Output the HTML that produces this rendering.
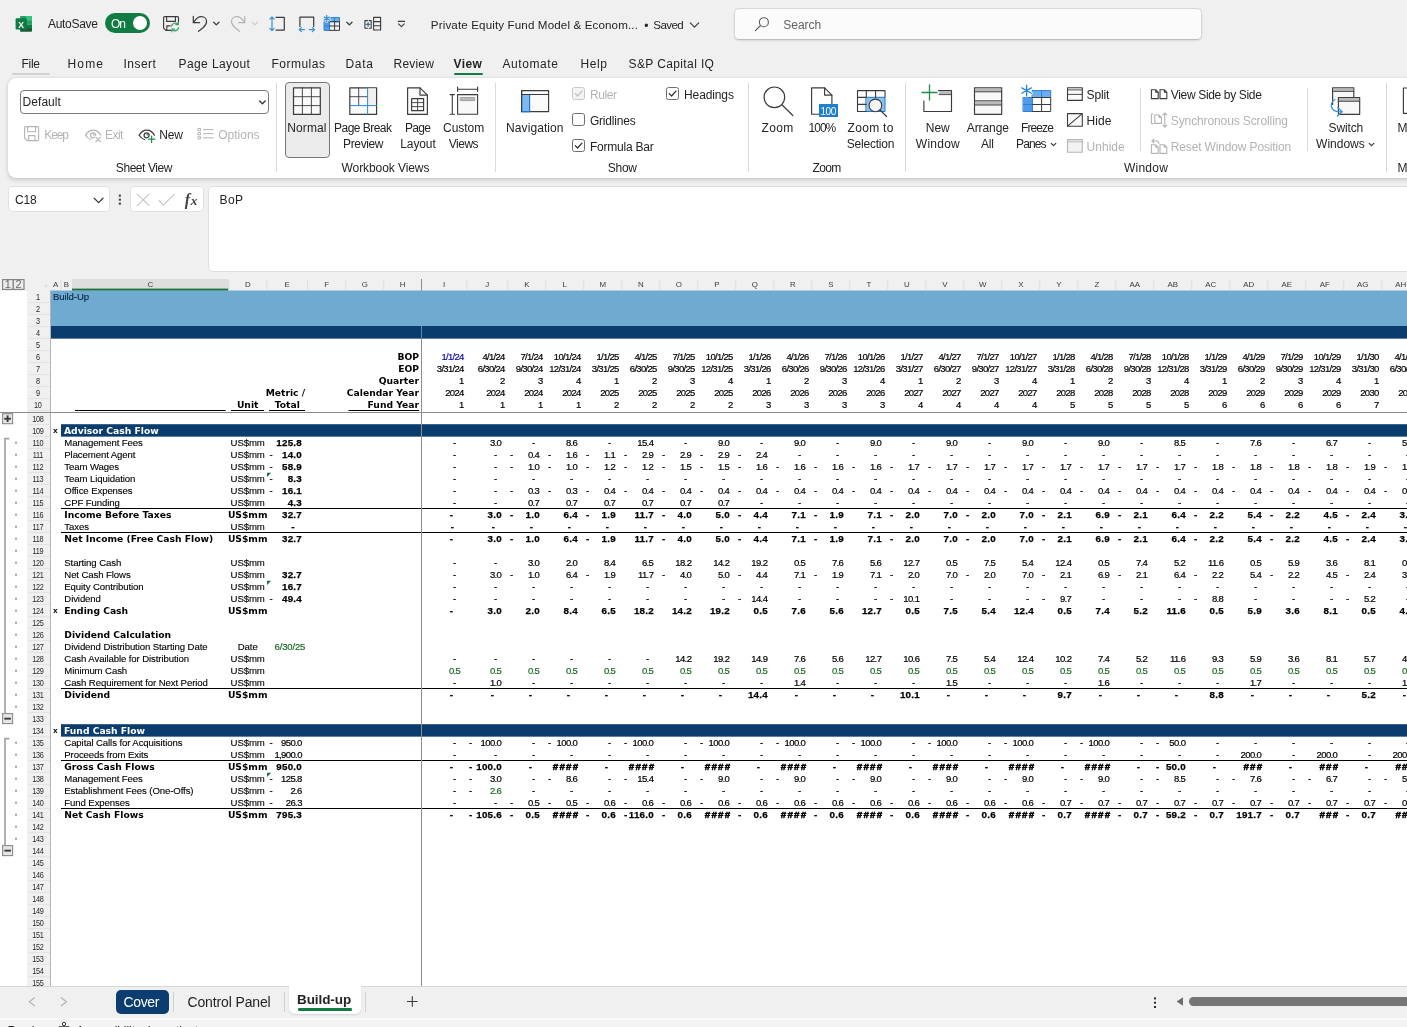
<!DOCTYPE html>
<html lang="en"><head><meta charset="utf-8"><title>Private Equity Fund Model &amp; Economics - Excel</title>
<style>

html,body{margin:0;padding:0;}
body{width:1407px;height:1027px;overflow:hidden;background:#f0f0f0;font-family:"Liberation Sans",sans-serif;}
#app{will-change:transform;position:relative;width:1407px;height:1027px;overflow:hidden;background:#f0f0f0;}
.t{position:absolute;white-space:pre;}
.a{position:absolute;}
svg{position:absolute;overflow:visible;}
.c{position:absolute;white-space:pre;font-size:9.6px;letter-spacing:-0.1px;-webkit-text-stroke:0.12px currentColor;line-height:12px;height:12px;color:#000;}
.n{font-size:9.5px;letter-spacing:-0.62px;-webkit-text-stroke:0.2px currentColor;}
.b{font-family:'DejaVu Sans',sans-serif;font-weight:700;font-size:9.2px;letter-spacing:0;-webkit-text-stroke:0;}
.bn{font-weight:700;font-size:9.8px;letter-spacing:0.2px;-webkit-text-stroke:0.25px currentColor;}
.r{text-align:right;}
.ctr{text-align:center;}
.g{color:#1c6a25;}
.rh{position:absolute;left:27px;width:21.6px;text-align:center;font-size:8.7px;letter-spacing:-0.35px;transform:scaleX(0.84);line-height:12px;height:12px;color:#262626;}
.ch{position:absolute;top:279px;height:12px;line-height:12px;font-size:7.9px;color:#3a3a3a;text-align:center;}

.row{position:absolute;left:421.5px;height:12px;white-space:nowrap;font-size:0;}
.row>i{display:inline-block;position:relative;font-style:normal;width:38px;height:12px;line-height:12px;font-size:9.5px;letter-spacing:-0.62px;text-align:right;padding-right:6.5px;box-sizing:border-box;color:#000;vertical-align:top;-webkit-text-stroke:0.2px currentColor;}
.row>i.w1{width:45.3px}.row>i.w2{width:41px}
.row>i.z{padding-right:11.2px}
.row>i>u{position:absolute;left:2.2px;top:0;text-decoration:none;}
.row.B>i{font-weight:700;font-size:9.8px;letter-spacing:0.2px;padding-right:6px;-webkit-text-stroke:0.25px currentColor;}
.row.B>i.z,.row.ZB>i.z{padding-right:13.5px}
.row.ZB>i{font-weight:700;}
.row.B>i.h{letter-spacing:1.2px;padding-right:4.4px;-webkit-text-stroke:0.55px currentColor;}
.row>i.g>u{color:#000;}
.row.G>i,.row>i.g{color:#1c6a25;}
.row.H>i{padding-right:3.2px;letter-spacing:-0.7px;}
.row>i.bl{color:#0a0aa8;}
</style></head>
<body>
<div id="app">
<div class="a" style="left:8px;top:77.5px;width:1420px;height:100.5px;background:#fff;border-radius:8px;box-shadow:0 1.5px 4px rgba(0,0,0,.17),0 0 1px rgba(0,0,0,.12);"></div>
<div class="a" style="left:734px;top:8px;width:467.5px;height:32px;background:#fbfbfb;border:1px solid #d6d6d6;border-bottom-color:#bdbdbd;border-radius:5px;box-sizing:border-box;box-shadow:0 1px 2px rgba(0,0,0,.10);"></div>
<div class="a" style="left:105px;top:13px;width:45px;height:20px;border-radius:10px;background:#107c41;"></div>
<div class="a" style="left:133px;top:16px;width:14px;height:14px;border-radius:7px;background:#fff;"></div>
<div class="a" style="left:12px;top:73px;width:38px;height:1.5px;background:#d2d2d2;border-radius:1px;"></div>
<div class="a" style="left:454px;top:72.5px;width:28.5px;height:2.6px;background:#107c41;border-radius:1.3px;"></div>
<div class="a" style="left:20px;top:90px;width:249px;height:24px;box-sizing:border-box;border:1px solid #7a7a7a;border-radius:4px;background:#fff;"></div>
<div class="a" style="left:285px;top:82px;width:45px;height:76px;box-sizing:border-box;border:1px solid #777;border-radius:4px;background:#ebebeb;"></div>
<div class="a" style="left:276px;top:83px;width:1px;height:89px;background:#dadada;"></div>
<div class="a" style="left:495px;top:83px;width:1px;height:89px;background:#dadada;"></div>
<div class="a" style="left:748px;top:83px;width:1px;height:89px;background:#dadada;"></div>
<div class="a" style="left:905px;top:83px;width:1px;height:89px;background:#dadada;"></div>
<div class="a" style="left:1386px;top:83px;width:1px;height:89px;background:#dadada;"></div>
<div class="a" style="left:1140px;top:88px;width:1px;height:63px;background:#dadada;"></div>
<div class="a" style="left:1307px;top:88px;width:1px;height:63px;background:#dadada;"></div>
<div class="a" style="left:572px;top:87px;width:13px;height:13px;box-sizing:border-box;border:1px solid #c9c9c9;border-radius:2.5px;background:#f3f3f3;"></div><svg style="left:572px;top:87px" width="13" height="13" viewBox="0 0 13 13"><path d="M3.2 6.6 L5.6 9 L10 4.2" fill="none" stroke="#c0c0c0" stroke-width="1.2" stroke-linecap="round" stroke-linejoin="round"/></svg>
<div class="a" style="left:572px;top:113px;width:13px;height:13px;box-sizing:border-box;border:1px solid #6e6e6e;border-radius:2.5px;background:#fff;"></div>
<div class="a" style="left:572px;top:139px;width:13px;height:13px;box-sizing:border-box;border:1px solid #6e6e6e;border-radius:2.5px;background:#fff;"></div><svg style="left:572px;top:139px" width="13" height="13" viewBox="0 0 13 13"><path d="M3.2 6.6 L5.6 9 L10 4.2" fill="none" stroke="#2b2b2b" stroke-width="1.2" stroke-linecap="round" stroke-linejoin="round"/></svg>
<div class="a" style="left:666px;top:87px;width:13px;height:13px;box-sizing:border-box;border:1px solid #6e6e6e;border-radius:2.5px;background:#fff;"></div><svg style="left:666px;top:87px" width="13" height="13" viewBox="0 0 13 13"><path d="M3.2 6.6 L5.6 9 L10 4.2" fill="none" stroke="#2b2b2b" stroke-width="1.2" stroke-linecap="round" stroke-linejoin="round"/></svg>
<div class="a" style="left:9px;top:187px;width:100px;height:24px;background:#fff;border-radius:4px;box-shadow:0 0 0 1px rgba(0,0,0,.06);"></div>
<div class="a" style="left:131px;top:187px;width:72px;height:24px;background:#fff;border-radius:4px;box-shadow:0 0 0 1px rgba(0,0,0,.06);"></div>
<div class="a" style="left:209px;top:187px;width:1220px;height:84px;background:#fff;border-radius:4px;box-shadow:0 0 0 1px rgba(0,0,0,.07);"></div>
<svg style="left:0;top:0" width="1407" height="300" viewBox="0 0 1407 300" fill="none" stroke-linecap="round" stroke-linejoin="round">
<g stroke="none"><path d="M21 16h10a1 1 0 0 1 1 1v3.7H20V17a1 1 0 0 1 1-1z" fill="#21a366"/><rect x="26" y="16" width="6" height="4.7" fill="#33c481"/><rect x="20" y="20.7" width="6" height="3.7" fill="#107c41"/><rect x="26" y="20.7" width="6" height="3.7" fill="#21a366"/><rect x="20" y="24.4" width="6" height="3.6" fill="#185c37"/><rect x="26" y="24.4" width="6" height="3.6" fill="#107c41"/><path d="M20 28h12v2.8a1 1 0 0 1-1 1H21a1 1 0 0 1-1-1z" fill="#185c37"/><rect x="15.6" y="18.2" width="11.2" height="11.4" rx="1" fill="#127a43"/></g>
<g stroke="#3b3b3b" stroke-width="1.15"><path d="M171 30.4h-5.2l-2.2-2.2V17.6a1 1 0 0 1 1-1h12.9a1 1 0 0 1 1 1V23"/><path d="M166.6 16.8v4.6h8.8v-4.6"/><path d="M166.8 30.2v-4.4h3.4"/></g>
<g stroke="#3fa066" stroke-width="1.25"><path d="M171.6 26.2a3.7 3.7 0 0 1 6.4-1.9"/><path d="M178.3 22.1v2.5h-2.5"/><path d="M178.6 27.6a3.7 3.7 0 0 1-6.4 1.9"/><path d="M171.9 31.7v-2.5h2.5"/></g>
<g stroke="#3b3b3b" stroke-width="1.2"><path d="M193.3 16.4v6.3h6.3"/><path d="M193.8 22.2c2.2-3.7 5.2-5.6 7.7-5.6 3 0 5.1 2.2 5.1 5 0 2.4-1.6 4.4-3.6 6.2l-4.4 3.5"/><path d="M213.7 22.3l2.6 2.6 2.6-2.6" stroke-width="1.3"/></g>
<g stroke="#b4b4b4" stroke-width="1.2"><path d="M244.8 16.4v6.3h-6.3"/><path d="M244.3 22.2c-2.2-3.7-5.2-5.6-7.7-5.6-3 0-5.1 2.2-5.1 5 0 2.4 1.6 4.4 3.6 6.2l4.4 3.5"/><path d="M252.3 22.3l2.6 2.6 2.6-2.6" stroke="#cdcdcd" stroke-width="1.3"/></g>
<g stroke-width="1.2"><path d="M276 17.3h8.3v12.8H276" stroke="#3b3b3b"/><path d="M272 17v13.4M269.9 19.2l2.1-2.3 2.1 2.3M269.9 28.3l2.1 2.3 2.1-2.3" stroke="#3a8fd6"/></g>
<g stroke-width="1.2"><path d="M299.9 26.6v-9.4h13.8v9.4" stroke="#3b3b3b"/><path d="M299.3 29.6h5.2M301.4 27.6l-2.2 2 2.2 2M309.3 29.6h5.2M312.4 27.6l2.2 2-2.2 2" stroke="#3a8fd6"/></g>
<g stroke-width="1"><rect x="329.6" y="17.6" width="9.9" height="4.1" fill="#6fb0f0" stroke="#2b7fd6"/><path d="M334.6 17.6v4.1" stroke="#2b7fd6"/><rect x="324.4" y="21.7" width="5.2" height="8.7" fill="#4f9be8" stroke="#2b7fd6"/><path d="M324.4 26h5.2" stroke="#2b7fd6"/><path d="M329.6 21.7h9.9v8.7h-9.9M334.6 21.7v8.7M329.6 26h9.9" stroke="#3b3b3b"/><path d="M326.8 15.4v6.2M324.1 17l5.4 3.1M329.5 17l-5.4 3.1" stroke="#f0f0f0" stroke-width="2.6"/><path d="M326.8 15.4v6.2M324.1 17l5.4 3.1M329.5 17l-5.4 3.1" stroke="#2584d8" stroke-width="1.15"/></g>
<path d="M346.8 22.3l2.6 2.6 2.6-2.6" stroke="#3b3b3b" stroke-width="1.3"/>
<g stroke="#3b3b3b" stroke-width="1.1"><rect x="373.6" y="17.4" width="7" height="12.6"/><path d="M373.6 21.6h7M373.6 25.8h7"/><path d="M367.5 20.6h-2.6v7.6h2.6M369.2 20.6h2v7.6h-2" /><path d="M366.3 24.4h3.6M368.1 22.6v3.6" stroke="#2f6f8f" stroke-width="1.2"/></g>
<path d="M398.3 21.4h6.2M398.5 23.9l2.9 2.8 2.9-2.8" stroke="#3b3b3b" stroke-width="1.15"/>
<path d="M690.3 22.9l4.2 4.2 4.2-4.2" stroke="#3b3b3b" stroke-width="1.15"/>
<g stroke="#5e5e5e" stroke-width="1.15"><circle cx="763.9" cy="22.2" r="4.5"/><path d="M760.6 25.5l-5.2 5.2"/></g>
<path d="M259.6 100.9l2.8 2.8 2.8-2.8" stroke="#3b3b3b" stroke-width="1.4"/>
<g stroke="#b4b4b4" stroke-width="1.1"><path d="M24.6 127.6a1 1 0 0 1 1-1h12a1 1 0 0 1 1 1v12a1 1 0 0 1-1 1H27.2l-2.6-2.6z"/><path d="M27.6 126.8v5h8v-5"/><path d="M28.6 140.4v-4.8h6.4v4.8"/></g>
<g stroke="#b4b4b4" stroke-width="1.25"><path d="M85.6 135.2c1.9-3.3 4.6-5 7.6-5s5.7 1.7 7.6 5"/><path d="M85.6 135.2c1.3 2.2 3 3.6 5.2 4.3"/><circle cx="93.0" cy="135.29999999999998" r="2.5"/><circle cx="93.6" cy="134.7" r="0.7" fill="#b4b4b4" stroke="none"/></g>
<path d="M95.8 137.2l4.6 4.6M100.4 137.2l-4.6 4.6" stroke="#fff" stroke-width="2.6"/><path d="M95.8 137.2l4.6 4.6M100.4 137.2l-4.6 4.6" stroke="#b4b4b4" stroke-width="1.15"/>
<g stroke="#3b3b3b" stroke-width="1.25"><path d="M139.2 135.2c1.9-3.3 4.6-5 7.6-5s5.7 1.7 7.6 5"/><path d="M139.2 135.2c1.3 2.2 3 3.6 5.2 4.3"/><circle cx="146.6" cy="135.29999999999998" r="2.5"/><circle cx="147.2" cy="134.7" r="0.7" fill="#3b3b3b" stroke="none"/></g>
<path d="M148.4 139.2h6.4M151.6 136v6.4" stroke="#fff" stroke-width="3"/><path d="M148.4 139.2h6.4M151.6 136v6.4" stroke="#1e8a4c" stroke-width="1.25"/>
<g stroke="#b4b4b4" stroke-width="1"><rect x="198.3" y="128.5" width="2.2" height="2.2"/><rect x="198.3" y="132.6" width="2.2" height="2.2"/><rect x="198.3" y="136.7" width="2.2" height="2.2"/><path d="M203.4 129.6h9.8M203.4 133.7h9.8M203.4 137.8h9.8"/></g>
<g stroke="#3b3b3b"><rect x="293.5" y="87.8" width="26.8" height="26.6" fill="#fafafa" stroke-width="1.2"/><path d="M302.4 87.8v26.6M311.4 87.8v26.6M293.5 96.7h26.8M293.5 105.6h26.8" stroke-width="0.9"/></g>
<g><rect x="349.8" y="87.8" width="26.8" height="26.6" fill="#fafafa" stroke="#3b3b3b" stroke-width="1.2"/><rect x="367.6" y="88.4" width="8.4" height="17" fill="#f0f0f0" stroke="none"/><path d="M358.7 87.8v17.7M349.8 96.7h17.8" stroke="#3b3b3b" stroke-width="0.9"/><path d="M367.6 87.8v26.6M349.8 105.6h26.8" stroke="#2b8ad6" stroke-width="1"/></g>
<g stroke="#3b3b3b" stroke-width="1.15"><path d="M407.6 87.8h12.4l7.4 7.3v19.3h-19.8z" fill="#fafafa"/><path d="M420 87.8v7.3h7.4"/><rect x="411.6" y="98.6" width="12" height="12"/><path d="M417.6 98.6v12M411.6 102.6h12M411.6 106.6h12" stroke-width="0.9"/></g>
<g stroke="#3b3b3b" stroke-width="1.1"><path d="M457.6 89.2h20M457.6 87v4.4M477.6 87v4.4M452.3 94.6v19.7M450.1 94.6h4.4M450.1 114.3h4.4"/><rect x="457.6" y="94.6" width="20" height="19.7" fill="#f8f8f8"/><rect x="460.6" y="97.6" width="14" height="3" fill="#bdbdbd" stroke="#8f8f8f" stroke-width="0.8"/></g>
<g stroke-width="1.15"><rect x="521.6" y="90.6" width="27" height="21" fill="#fafafa" stroke="#3b3b3b"/><rect x="521.6" y="94.5" width="8" height="17.1" fill="#7fb9ee" stroke="#1f78d1"/><path d="M521.6 94.5h27" stroke="#3b3b3b"/><path d="M521.6 90.6v21" stroke="#3b3b3b"/></g>
<g stroke="#3b3b3b" stroke-width="1.2"><circle cx="774.4" cy="97.3" r="10.3"/><path d="M781.9 104.8l10.9 10.7"/></g>
<g stroke="#3b3b3b" stroke-width="1.15"><path d="M819 114.2h-7.4V87.8h13l7.3 7.3v9"/><path d="M824.6 87.8v7.3h7.3"/></g><rect x="819" y="104" width="19" height="13" fill="#1e7fd1" stroke="none"/>
<g stroke-width="1"><rect x="866.3" y="97.3" width="18.7" height="14.2" fill="#8fc1ef" stroke="#1f78d1"/><path d="M857.5 90.6h27.5v6.7M857.5 90.6v20.9h8.8M857.5 97.4h8.8M857.5 104.4h8.8M866.3 90.6v6.8M875.6 90.6v6.8" stroke="#3b3b3b" stroke-width="1.1"/><circle cx="875.4" cy="105.4" r="6.3" fill="#f4f4f4" stroke="#3b3b3b" stroke-width="1.1"/><path d="M880 110l6.6 6.5" stroke="#3b3b3b" stroke-width="1.2"/></g>
<g stroke-width="1.15"><path d="M938.5 90.6h13v20.9h-27.6V101" stroke="#3b3b3b" fill="none"/><rect x="939.3" y="91.2" width="11.7" height="3.2" fill="#b9b9b9" stroke="none"/><path d="M939 94.6h12.5" stroke="#3b3b3b" stroke-width="0.9"/><path d="M922 92.5h15M929.5 85v15" stroke="#1e8a4c" stroke-width="1.3"/></g>
<g stroke="#3b3b3b" stroke-width="1.15"><rect x="974.5" y="87.8" width="27.2" height="26.5" fill="#f8f8f8"/><rect x="975.1" y="88.4" width="26" height="3.2" fill="#b9b9b9" stroke="none"/><rect x="975.1" y="101.4" width="26" height="3.4" fill="#b9b9b9" stroke="none"/><path d="M974.5 91.8h27.2M974.5 100.8h27.2M974.5 105h27.2" stroke-width="0.95"/></g>
<g stroke-width="1"><rect x="1032.4" y="90.6" width="18.3" height="6.9" fill="#6aaeee" stroke="#2b7fd6"/><rect x="1023.4" y="97.5" width="9" height="14" fill="#4f9be8" stroke="#2b7fd6"/><path d="M1041.6 90.6v6.9M1023.4 104.5h9" stroke="#2b7fd6"/><path d="M1032.4 97.5h18.3v14h-18.3M1041.6 97.5v14M1032.4 104.5h18.3" stroke="#3b3b3b"/><path d="M1026.6 85.2v10.8M1021.9 87.9l9.4 5.4M1031.3 87.9l-9.4 5.4" stroke="#fff" stroke-width="3"/><path d="M1026.6 85.2v10.8M1021.9 87.9l9.4 5.4M1031.3 87.9l-9.4 5.4" stroke="#2584d8" stroke-width="1.3"/></g>
<path d="M1051.2 143.4l2.3 2.3 2.3-2.3" stroke="#3b3b3b" stroke-width="1.2"/>
<path d="M1369.2 143.4l2.3 2.3 2.3-2.3" stroke="#3b3b3b" stroke-width="1.2"/>
<g stroke="#3b3b3b" stroke-width="1.1"><rect x="1067.5" y="87.8" width="14.8" height="12.6" fill="#fafafa"/><path d="M1067.5 89.9h14.8M1067.5 94.4h14.8" stroke-width="0.9"/></g>
<g stroke="#3b3b3b" stroke-width="1.1"><rect x="1067.5" y="113.6" width="14.8" height="12.6" fill="#fafafa"/><path d="M1067.8 125.9l14.2-12"/></g>
<g stroke="#b4b4b4" stroke-width="1.1"><rect x="1067.5" y="139.6" width="14.8" height="12.6" fill="#f2f2f2"/><path d="M1067.5 141.8h14.8" stroke-width="0.9"/></g>
<path d="M1151.4 89.8h4.4l2.4 2.4v6.4h-6.8z M1155.8 89.8v2.4h2.4" stroke="#3b3b3b" stroke-width="1.1" stroke-linejoin="miter"/>
<path d="M1160 89.8h4.4l2.4 2.4v6.4h-6.8z M1164.3999999999999 89.8v2.4h2.4" stroke="#3b3b3b" stroke-width="1.1" stroke-linejoin="miter"/>
<g stroke="#b4b4b4" stroke-width="1.1"><path d="M1153.2 114h-1.8v9.6h1.8"/></g><path d="M1154.8 115h4.199999999999999l2.4 2.4v6.0h-6.6z M1158.9999999999998 115v2.4h2.4" stroke="#b4b4b4" stroke-width="1.1" stroke-linejoin="miter"/><path d="M1164.8 112.8v14.4M1162.8 114.8l2-2 2 2M1162.8 125.2l2 2 2-2" stroke="#b4b4b4" stroke-width="1.1"/>
<path d="M1151.4 144.8h4.4l2.4 2.4v6.199999999999999h-6.8z M1155.8 144.8v2.4h2.4" stroke="#b4b4b4" stroke-width="1.1" stroke-linejoin="miter"/><path d="M1160 144.8h4.4l2.4 2.4v6.199999999999999h-6.8z M1164.3999999999999 144.8v2.4h2.4" stroke="#b4b4b4" stroke-width="1.1" stroke-linejoin="miter"/><path d="M1152 141h4.2c1.6 0 2.6 1 2.6 2.4M1153.8 139.2l-1.9 1.8 1.9 1.8" stroke="#b4b4b4" stroke-width="1.1"/>
<g stroke="#3b3b3b" stroke-width="1.15"><path d="M1332.6 104.5V87.8h21.2v9.3" fill="#f8f8f8"/><rect x="1333.2" y="88.4" width="20" height="2.8" fill="#b9b9b9" stroke="none"/><path d="M1332.6 91.4h21.2" stroke-width="0.9"/><rect x="1338.4" y="97.6" width="21.3" height="16.7" fill="#f8f8f8"/><rect x="1339" y="98.2" width="20.1" height="2.9" fill="#b9b9b9" stroke="none"/><path d="M1338.4 101.3h21.3" stroke-width="0.9"/></g>
<path d="M1334.8 99.6c-3.6 2.2-4.6 6.2-2.4 9.2 1.8 2.4 5.2 3.2 9.4 3M1337.6 107.4l4.6 4.4-4.8 4.2" stroke="#3a8fd6" stroke-width="1.2"/>
<path d="M1410 88h-6.6v25.4h6.6" stroke="#3b3b3b" stroke-width="1.15"/>
<path d="M94.2 198.2l4.4 4.4 4.4-4.4" stroke="#3b3b3b" stroke-width="1.25"/>
<g fill="#444" stroke="none"><rect x="118.8" y="194.6" width="2.1" height="2.1"/><rect x="118.8" y="198.6" width="2.1" height="2.1"/><rect x="118.8" y="202.6" width="2.1" height="2.1"/></g>
<path d="M137.2 194.2l12 11.4M149.2 194.2l-12 11.4" stroke="#c4c4c4" stroke-width="1.1"/>
<path d="M159 200.6l4.4 4.6 11-11" stroke="#c4c4c4" stroke-width="1.1"/>
</svg>
<!-- sheet -->
<div class="a" style="left:0;top:291px;width:1407px;height:695px;background:#fff;"></div>
<div class="a" style="left:27px;top:290px;width:23.5px;height:696px;background:#f0f0f0;"></div>
<svg style="left:0;top:0" width="1407" height="1027" viewBox="0 0 1407 1027"><rect x="50.5" y="290.5" width="1360" height="36.1" fill="#6faad1"/><rect x="50.5" y="326" width="1360" height="12.65" fill="#0a3c6e"/><rect x="61" y="424.2" width="1350" height="12.45" fill="#0a3c6e"/><rect x="61" y="724.2" width="1350" height="12.45" fill="#0a3c6e"/><rect x="72" y="279" width="156.6" height="11.5" fill="#dedede"/><rect x="72" y="288.6" width="156.6" height="2" fill="#1d7044"/><rect x="60.5" y="280" width="1" height="10.5" fill="#dcdcdc"/><rect x="228.2" y="280" width="1" height="10.5" fill="#dcdcdc"/><rect x="266.3" y="280" width="1" height="10.5" fill="#dcdcdc"/><rect x="307.1" y="280" width="1" height="10.5" fill="#dcdcdc"/><rect x="345.3" y="280" width="1" height="10.5" fill="#dcdcdc"/><rect x="383.3" y="280" width="1" height="10.5" fill="#dcdcdc"/><rect x="421.0" y="280" width="1" height="10.5" fill="#dcdcdc"/><rect x="466.3" y="280" width="1" height="10.5" fill="#dcdcdc"/><rect x="507.3" y="280" width="1" height="10.5" fill="#dcdcdc"/><rect x="545.3" y="280" width="1" height="10.5" fill="#dcdcdc"/><rect x="583.3" y="280" width="1" height="10.5" fill="#dcdcdc"/><rect x="621.3" y="280" width="1" height="10.5" fill="#dcdcdc"/><rect x="659.3" y="280" width="1" height="10.5" fill="#dcdcdc"/><rect x="697.3" y="280" width="1" height="10.5" fill="#dcdcdc"/><rect x="735.3" y="280" width="1" height="10.5" fill="#dcdcdc"/><rect x="773.3" y="280" width="1" height="10.5" fill="#dcdcdc"/><rect x="811.3" y="280" width="1" height="10.5" fill="#dcdcdc"/><rect x="849.3" y="280" width="1" height="10.5" fill="#dcdcdc"/><rect x="887.3" y="280" width="1" height="10.5" fill="#dcdcdc"/><rect x="925.3" y="280" width="1" height="10.5" fill="#dcdcdc"/><rect x="963.3" y="280" width="1" height="10.5" fill="#dcdcdc"/><rect x="1001.3" y="280" width="1" height="10.5" fill="#dcdcdc"/><rect x="1039.3" y="280" width="1" height="10.5" fill="#dcdcdc"/><rect x="1077.3" y="280" width="1" height="10.5" fill="#dcdcdc"/><rect x="1115.3" y="280" width="1" height="10.5" fill="#dcdcdc"/><rect x="1153.3" y="280" width="1" height="10.5" fill="#dcdcdc"/><rect x="1191.3" y="280" width="1" height="10.5" fill="#dcdcdc"/><rect x="1229.3" y="280" width="1" height="10.5" fill="#dcdcdc"/><rect x="1267.3" y="280" width="1" height="10.5" fill="#dcdcdc"/><rect x="1305.3" y="280" width="1" height="10.5" fill="#dcdcdc"/><rect x="1343.3" y="280" width="1" height="10.5" fill="#dcdcdc"/><rect x="1381.3" y="280" width="1" height="10.5" fill="#dcdcdc"/><rect x="1419.3" y="280" width="1" height="10.5" fill="#dcdcdc"/><rect x="29" y="302.0" width="21" height="1" fill="#e2e2e2"/><rect x="29" y="314.0" width="21" height="1" fill="#e2e2e2"/><rect x="29" y="326.0" width="21" height="1" fill="#e2e2e2"/><rect x="29" y="338.0" width="21" height="1" fill="#e2e2e2"/><rect x="29" y="350.0" width="21" height="1" fill="#e2e2e2"/><rect x="29" y="362.0" width="21" height="1" fill="#e2e2e2"/><rect x="29" y="374.0" width="21" height="1" fill="#e2e2e2"/><rect x="29" y="386.0" width="21" height="1" fill="#e2e2e2"/><rect x="29" y="398.0" width="21" height="1" fill="#e2e2e2"/><rect x="29" y="410.0" width="21" height="1" fill="#e2e2e2"/><rect x="29" y="423.9" width="21" height="1" fill="#e2e2e2"/><rect x="29" y="435.9" width="21" height="1" fill="#e2e2e2"/><rect x="29" y="447.9" width="21" height="1" fill="#e2e2e2"/><rect x="29" y="459.9" width="21" height="1" fill="#e2e2e2"/><rect x="29" y="471.9" width="21" height="1" fill="#e2e2e2"/><rect x="29" y="483.9" width="21" height="1" fill="#e2e2e2"/><rect x="29" y="495.9" width="21" height="1" fill="#e2e2e2"/><rect x="29" y="507.9" width="21" height="1" fill="#e2e2e2"/><rect x="29" y="519.9" width="21" height="1" fill="#e2e2e2"/><rect x="29" y="531.9" width="21" height="1" fill="#e2e2e2"/><rect x="29" y="543.9" width="21" height="1" fill="#e2e2e2"/><rect x="29" y="555.9" width="21" height="1" fill="#e2e2e2"/><rect x="29" y="567.9" width="21" height="1" fill="#e2e2e2"/><rect x="29" y="579.9" width="21" height="1" fill="#e2e2e2"/><rect x="29" y="591.9" width="21" height="1" fill="#e2e2e2"/><rect x="29" y="603.9" width="21" height="1" fill="#e2e2e2"/><rect x="29" y="615.9" width="21" height="1" fill="#e2e2e2"/><rect x="29" y="627.9" width="21" height="1" fill="#e2e2e2"/><rect x="29" y="639.9" width="21" height="1" fill="#e2e2e2"/><rect x="29" y="651.9" width="21" height="1" fill="#e2e2e2"/><rect x="29" y="663.9" width="21" height="1" fill="#e2e2e2"/><rect x="29" y="675.9" width="21" height="1" fill="#e2e2e2"/><rect x="29" y="687.9" width="21" height="1" fill="#e2e2e2"/><rect x="29" y="699.9" width="21" height="1" fill="#e2e2e2"/><rect x="29" y="711.9" width="21" height="1" fill="#e2e2e2"/><rect x="29" y="723.9" width="21" height="1" fill="#e2e2e2"/><rect x="29" y="735.9" width="21" height="1" fill="#e2e2e2"/><rect x="29" y="747.9" width="21" height="1" fill="#e2e2e2"/><rect x="29" y="759.9" width="21" height="1" fill="#e2e2e2"/><rect x="29" y="771.9" width="21" height="1" fill="#e2e2e2"/><rect x="29" y="783.9" width="21" height="1" fill="#e2e2e2"/><rect x="29" y="795.9" width="21" height="1" fill="#e2e2e2"/><rect x="29" y="807.9" width="21" height="1" fill="#e2e2e2"/><rect x="29" y="819.9" width="21" height="1" fill="#e2e2e2"/><rect x="29" y="831.9" width="21" height="1" fill="#e2e2e2"/><rect x="29" y="843.9" width="21" height="1" fill="#e2e2e2"/><rect x="29" y="855.9" width="21" height="1" fill="#e2e2e2"/><rect x="29" y="867.9" width="21" height="1" fill="#e2e2e2"/><rect x="29" y="879.9" width="21" height="1" fill="#e2e2e2"/><rect x="29" y="891.9" width="21" height="1" fill="#e2e2e2"/><rect x="29" y="903.9" width="21" height="1" fill="#e2e2e2"/><rect x="29" y="915.9" width="21" height="1" fill="#e2e2e2"/><rect x="29" y="927.9" width="21" height="1" fill="#e2e2e2"/><rect x="29" y="939.9" width="21" height="1" fill="#e2e2e2"/><rect x="29" y="951.9" width="21" height="1" fill="#e2e2e2"/><rect x="29" y="963.9" width="21" height="1" fill="#e2e2e2"/><rect x="29" y="975.9" width="21" height="1" fill="#e2e2e2"/><rect x="29" y="987.9" width="21" height="1" fill="#e2e2e2"/><rect x="50" y="290.5" width="1" height="696" fill="#b5b5b5"/><rect x="61" y="508" width="1350" height="1" fill="#000"/><rect x="61" y="532" width="1350" height="1" fill="#000"/><rect x="61" y="688" width="1350" height="1" fill="#000"/><rect x="61" y="760" width="1350" height="1" fill="#000"/><rect x="61" y="808" width="1350" height="1" fill="#000"/><rect x="75" y="410.0" width="150.6" height="1" fill="#000"/><rect x="231" y="410.0" width="33.0" height="1" fill="#000"/><rect x="269" y="410.0" width="36.0" height="1" fill="#000"/><rect x="348.5" y="410.0" width="70.7" height="1" fill="#000"/><rect x="0" y="412" width="1407" height="1" fill="#8c8c8c"/><rect x="421" y="279" width="1" height="11.5" fill="#8a8a8a"/><rect x="421" y="290.5" width="1" height="35.5" fill="#7ba6c6"/><rect x="421" y="326" width="1" height="12.6" fill="#5d86b0"/><rect x="421" y="338.6" width="1" height="647.9" fill="#8e8e8e"/><path d="M267 472.7h4.2l-4.2 4.2z" fill="#1d7044"/><path d="M267 580.7h4.2l-4.2 4.2z" fill="#1d7044"/><path d="M267 772.7h4.2l-4.2 4.2z" fill="#1d7044"/><rect x="2.6" y="279.6" width="10.7" height="9.8" fill="#ececec" stroke="#858585" stroke-width="1.2"/><rect x="13.3" y="279.6" width="10.7" height="9.8" fill="#ececec" stroke="#858585" stroke-width="1.2"/><path d="M47.2 283.8v3.4h-3.4z" fill="#dcdcdc"/><rect x="2.6" y="413.7" width="10" height="10" fill="#e6e6e6" stroke="#8a8a8a" stroke-width="1.1"/><rect x="4.3" y="417.8" width="6.6" height="1.9" fill="#3a3a3a"/><rect x="6.65" y="415.4" width="1.9" height="6.6" fill="#3a3a3a"/><rect x="2.6" y="713.6" width="10" height="10" fill="#e6e6e6" stroke="#8a8a8a" stroke-width="1.1"/><rect x="4.3" y="717.7" width="6.6" height="1.9" fill="#3a3a3a"/><rect x="2.6" y="845.6" width="10" height="10" fill="#e6e6e6" stroke="#8a8a8a" stroke-width="1.1"/><rect x="4.3" y="849.7" width="6.6" height="1.9" fill="#3a3a3a"/><path d="M9.4 438.6H5V713.6" fill="none" stroke="#a3a3a3" stroke-width="1.7"/><path d="M9.4 738.6H5V845.6" fill="none" stroke="#a3a3a3" stroke-width="1.7"/><rect x="14.9" y="441.6" width="2.2" height="2.2" fill="#adadad"/><rect x="14.9" y="453.6" width="2.2" height="2.2" fill="#adadad"/><rect x="14.9" y="465.6" width="2.2" height="2.2" fill="#adadad"/><rect x="14.9" y="477.6" width="2.2" height="2.2" fill="#adadad"/><rect x="14.9" y="489.6" width="2.2" height="2.2" fill="#adadad"/><rect x="14.9" y="501.6" width="2.2" height="2.2" fill="#adadad"/><rect x="14.9" y="513.6" width="2.2" height="2.2" fill="#adadad"/><rect x="14.9" y="525.6" width="2.2" height="2.2" fill="#adadad"/><rect x="14.9" y="537.6" width="2.2" height="2.2" fill="#adadad"/><rect x="14.9" y="549.6" width="2.2" height="2.2" fill="#adadad"/><rect x="14.9" y="561.6" width="2.2" height="2.2" fill="#adadad"/><rect x="14.9" y="573.6" width="2.2" height="2.2" fill="#adadad"/><rect x="14.9" y="585.6" width="2.2" height="2.2" fill="#adadad"/><rect x="14.9" y="597.6" width="2.2" height="2.2" fill="#adadad"/><rect x="14.9" y="609.6" width="2.2" height="2.2" fill="#adadad"/><rect x="14.9" y="621.6" width="2.2" height="2.2" fill="#adadad"/><rect x="14.9" y="633.6" width="2.2" height="2.2" fill="#adadad"/><rect x="14.9" y="645.6" width="2.2" height="2.2" fill="#adadad"/><rect x="14.9" y="657.6" width="2.2" height="2.2" fill="#adadad"/><rect x="14.9" y="669.6" width="2.2" height="2.2" fill="#adadad"/><rect x="14.9" y="681.6" width="2.2" height="2.2" fill="#adadad"/><rect x="14.9" y="693.6" width="2.2" height="2.2" fill="#adadad"/><rect x="14.9" y="705.6" width="2.2" height="2.2" fill="#adadad"/><rect x="14.9" y="741.6" width="2.2" height="2.2" fill="#adadad"/><rect x="14.9" y="753.6" width="2.2" height="2.2" fill="#adadad"/><rect x="14.9" y="765.6" width="2.2" height="2.2" fill="#adadad"/><rect x="14.9" y="777.6" width="2.2" height="2.2" fill="#adadad"/><rect x="14.9" y="789.6" width="2.2" height="2.2" fill="#adadad"/><rect x="14.9" y="801.6" width="2.2" height="2.2" fill="#adadad"/><rect x="14.9" y="813.6" width="2.2" height="2.2" fill="#adadad"/><rect x="14.9" y="825.6" width="2.2" height="2.2" fill="#adadad"/><rect x="14.9" y="837.6" width="2.2" height="2.2" fill="#adadad"/></svg>
<span class="t" style="left:4.8px;top:278.2px;font-size:11px;line-height:12px;color:#686868;">1</span><span class="t" style="left:15.4px;top:278.2px;font-size:11px;line-height:12px;color:#686868;">2</span>
<div class="ch" style="left:50.5px;width:10.5px">A</div>
<div class="ch" style="left:61.0px;width:11.0px">B</div>
<div class="ch" style="left:72.0px;width:156.7px">C</div>
<div class="ch" style="left:228.7px;width:38.1px">D</div>
<div class="ch" style="left:266.8px;width:40.8px">E</div>
<div class="ch" style="left:307.6px;width:38.2px">F</div>
<div class="ch" style="left:345.8px;width:38.0px">G</div>
<div class="ch" style="left:383.8px;width:37.7px">H</div>
<div class="ch" style="left:421.5px;width:45.3px">I</div>
<div class="ch" style="left:466.8px;width:41.0px">J</div>
<div class="ch" style="left:507.8px;width:38.0px">K</div>
<div class="ch" style="left:545.8px;width:38.0px">L</div>
<div class="ch" style="left:583.8px;width:38.0px">M</div>
<div class="ch" style="left:621.8px;width:38.0px">N</div>
<div class="ch" style="left:659.8px;width:38.0px">O</div>
<div class="ch" style="left:697.8px;width:38.0px">P</div>
<div class="ch" style="left:735.8px;width:38.0px">Q</div>
<div class="ch" style="left:773.8px;width:38.0px">R</div>
<div class="ch" style="left:811.8px;width:38.0px">S</div>
<div class="ch" style="left:849.8px;width:38.0px">T</div>
<div class="ch" style="left:887.8px;width:38.0px">U</div>
<div class="ch" style="left:925.8px;width:38.0px">V</div>
<div class="ch" style="left:963.8px;width:38.0px">W</div>
<div class="ch" style="left:1001.8px;width:38.0px">X</div>
<div class="ch" style="left:1039.8px;width:38.0px">Y</div>
<div class="ch" style="left:1077.8px;width:38.0px">Z</div>
<div class="ch" style="left:1115.8px;width:38.0px">AA</div>
<div class="ch" style="left:1153.8px;width:38.0px">AB</div>
<div class="ch" style="left:1191.8px;width:38.0px">AC</div>
<div class="ch" style="left:1229.8px;width:38.0px">AD</div>
<div class="ch" style="left:1267.8px;width:38.0px">AE</div>
<div class="ch" style="left:1305.8px;width:38.0px">AF</div>
<div class="ch" style="left:1343.8px;width:38.0px">AG</div>
<div class="ch" style="left:1381.8px;width:38.0px">AH</div>
<div class="rh" style="top:291px">1</div>
<div class="rh" style="top:303px">2</div>
<div class="rh" style="top:315px">3</div>
<div class="rh" style="top:327px">4</div>
<div class="rh" style="top:339px">5</div>
<div class="rh" style="top:351px">6</div>
<div class="rh" style="top:363px">7</div>
<div class="rh" style="top:375px">8</div>
<div class="rh" style="top:387px">9</div>
<div class="rh" style="top:399px">10</div>
<div class="rh" style="top:413px">108</div>
<div class="rh" style="top:425px">109</div>
<div class="rh" style="top:437px">110</div>
<div class="rh" style="top:449px">111</div>
<div class="rh" style="top:461px">112</div>
<div class="rh" style="top:473px">113</div>
<div class="rh" style="top:485px">114</div>
<div class="rh" style="top:497px">115</div>
<div class="rh" style="top:509px">116</div>
<div class="rh" style="top:521px">117</div>
<div class="rh" style="top:533px">118</div>
<div class="rh" style="top:545px">119</div>
<div class="rh" style="top:557px">120</div>
<div class="rh" style="top:569px">121</div>
<div class="rh" style="top:581px">122</div>
<div class="rh" style="top:593px">123</div>
<div class="rh" style="top:605px">124</div>
<div class="rh" style="top:617px">125</div>
<div class="rh" style="top:629px">126</div>
<div class="rh" style="top:641px">127</div>
<div class="rh" style="top:653px">128</div>
<div class="rh" style="top:665px">129</div>
<div class="rh" style="top:677px">130</div>
<div class="rh" style="top:689px">131</div>
<div class="rh" style="top:701px">132</div>
<div class="rh" style="top:713px">133</div>
<div class="rh" style="top:725px">134</div>
<div class="rh" style="top:737px">135</div>
<div class="rh" style="top:749px">136</div>
<div class="rh" style="top:761px">137</div>
<div class="rh" style="top:773px">138</div>
<div class="rh" style="top:785px">139</div>
<div class="rh" style="top:797px">140</div>
<div class="rh" style="top:809px">141</div>
<div class="rh" style="top:821px">142</div>
<div class="rh" style="top:833px">143</div>
<div class="rh" style="top:845px">144</div>
<div class="rh" style="top:857px">145</div>
<div class="rh" style="top:869px">146</div>
<div class="rh" style="top:881px">147</div>
<div class="rh" style="top:893px">148</div>
<div class="rh" style="top:905px">149</div>
<div class="rh" style="top:917px">150</div>
<div class="rh" style="top:929px">151</div>
<div class="rh" style="top:941px">152</div>
<div class="rh" style="top:953px">153</div>
<div class="rh" style="top:965px">154</div>
<div class="rh" style="top:977px">155</div>
<div class="c" style="left:53px;top:291px;color:#0b2240;">Build-Up</div>
<div class="c b r" style="left:300px;width:119px;top:351px">BOP</div>
<div class="c b r" style="left:300px;width:119px;top:363px">EOP</div>
<div class="c b r" style="left:300px;width:119px;top:375px">Quarter</div>
<div class="c b r" style="left:300px;width:119px;top:387px">Calendar Year</div>
<div class="c b r" style="left:300px;width:119px;top:399px">Fund Year</div>
<div class="c b ctr" style="left:255.4px;width:60px;top:387px">Metric /</div>
<div class="c b ctr" style="left:228.7px;width:38px;top:399px">Unit</div>
<div class="c b ctr" style="left:266.8px;width:41px;top:399px">Total</div>
<div class="row H" style="top:351px"><i class="w1 bl">1/1/24</i><i class="w2">4/1/24</i><i>7/1/24</i><i>10/1/24</i><i>1/1/25</i><i>4/1/25</i><i>7/1/25</i><i>10/1/25</i><i>1/1/26</i><i>4/1/26</i><i>7/1/26</i><i>10/1/26</i><i>1/1/27</i><i>4/1/27</i><i>7/1/27</i><i>10/1/27</i><i>1/1/28</i><i>4/1/28</i><i>7/1/28</i><i>10/1/28</i><i>1/1/29</i><i>4/1/29</i><i>7/1/29</i><i>10/1/29</i><i>1/1/30</i><i>4/1/30</i></div>
<div class="row H" style="top:363px"><i class="w1">3/31/24</i><i class="w2">6/30/24</i><i>9/30/24</i><i>12/31/24</i><i>3/31/25</i><i>6/30/25</i><i>9/30/25</i><i>12/31/25</i><i>3/31/26</i><i>6/30/26</i><i>9/30/26</i><i>12/31/26</i><i>3/31/27</i><i>6/30/27</i><i>9/30/27</i><i>12/31/27</i><i>3/31/28</i><i>6/30/28</i><i>9/30/28</i><i>12/31/28</i><i>3/31/29</i><i>6/30/29</i><i>9/30/29</i><i>12/31/29</i><i>3/31/30</i><i>6/30/30</i></div>
<div class="row H" style="top:375px"><i class="w1">1</i><i class="w2">2</i><i>3</i><i>4</i><i>1</i><i>2</i><i>3</i><i>4</i><i>1</i><i>2</i><i>3</i><i>4</i><i>1</i><i>2</i><i>3</i><i>4</i><i>1</i><i>2</i><i>3</i><i>4</i><i>1</i><i>2</i><i>3</i><i>4</i><i>1</i><i>2</i></div>
<div class="row H" style="top:387px"><i class="w1">2024</i><i class="w2">2024</i><i>2024</i><i>2024</i><i>2025</i><i>2025</i><i>2025</i><i>2025</i><i>2026</i><i>2026</i><i>2026</i><i>2026</i><i>2027</i><i>2027</i><i>2027</i><i>2027</i><i>2028</i><i>2028</i><i>2028</i><i>2028</i><i>2029</i><i>2029</i><i>2029</i><i>2029</i><i>2030</i><i>2030</i></div>
<div class="row H" style="top:399px"><i class="w1">1</i><i class="w2">1</i><i>1</i><i>1</i><i>2</i><i>2</i><i>2</i><i>2</i><i>3</i><i>3</i><i>3</i><i>3</i><i>4</i><i>4</i><i>4</i><i>4</i><i>5</i><i>5</i><i>5</i><i>5</i><i>6</i><i>6</i><i>6</i><i>6</i><i>7</i><i>7</i></div>
<div class="c b" style="left:64px;top:425px;color:#fff">Advisor Cash Flow</div>
<div class="c b" style="left:64px;top:725px;color:#fff">Fund Cash Flow</div>
<div class="c" style="left:53.2px;top:425px;font-size:7.6px;font-weight:700;">x</div>
<div class="c" style="left:53.2px;top:605px;font-size:7.6px;font-weight:700;">x</div>
<div class="c" style="left:53.2px;top:725px;font-size:7.6px;font-weight:700;">x</div>
<div class="c" style="left:64.3px;top:437px">Management Fees</div>
<div class="c ctr" style="left:228.7px;width:38px;top:437px">US$mm</div>
<div class="c bn r" style="left:250px;width:51.9px;top:437px">125.8</div>
<div class="c" style="left:64.3px;top:449px">Placement Agent</div>
<div class="c ctr" style="left:228.7px;width:38px;top:449px">US$mm</div>
<div class="c bn r" style="left:250px;width:51.9px;top:449px">14.0</div>
<div class="c" style="left:269.6px;top:449px">-</div>
<div class="c" style="left:64.3px;top:461px">Team Wages</div>
<div class="c ctr" style="left:228.7px;width:38px;top:461px">US$mm</div>
<div class="c bn r" style="left:250px;width:51.9px;top:461px">58.9</div>
<div class="c" style="left:269.6px;top:461px">-</div>
<div class="c" style="left:64.3px;top:473px">Team Liquidation</div>
<div class="c ctr" style="left:228.7px;width:38px;top:473px">US$mm</div>
<div class="c bn r" style="left:250px;width:51.9px;top:473px">8.3</div>
<div class="c" style="left:269.6px;top:473px">-</div>
<div class="c" style="left:64.3px;top:485px">Office Expenses</div>
<div class="c ctr" style="left:228.7px;width:38px;top:485px">US$mm</div>
<div class="c bn r" style="left:250px;width:51.9px;top:485px">16.1</div>
<div class="c" style="left:269.6px;top:485px">-</div>
<div class="c" style="left:64.3px;top:497px">CPF Funding</div>
<div class="c ctr" style="left:228.7px;width:38px;top:497px">US$mm</div>
<div class="c bn r" style="left:250px;width:51.9px;top:497px">4.3</div>
<div class="c b" style="left:64.3px;top:509px">Income Before Taxes</div>
<div class="c b ctr" style="left:218.7px;width:58px;top:509px">US$mm</div>
<div class="c bn r" style="left:250px;width:51.9px;top:509px">32.7</div>
<div class="c" style="left:64.3px;top:521px">Taxes</div>
<div class="c ctr" style="left:228.7px;width:38px;top:521px">US$mm</div>
<div class="c bn r" style="left:266.8px;width:27.8px;top:521px">-</div>
<div class="c b" style="left:64.3px;top:533px">Net Income (Free Cash Flow)</div>
<div class="c b ctr" style="left:218.7px;width:58px;top:533px">US$mm</div>
<div class="c bn r" style="left:250px;width:51.9px;top:533px">32.7</div>
<div class="c" style="left:64.3px;top:557px">Starting Cash</div>
<div class="c ctr" style="left:228.7px;width:38px;top:557px">US$mm</div>
<div class="c" style="left:64.3px;top:569px">Net Cash Flows</div>
<div class="c ctr" style="left:228.7px;width:38px;top:569px">US$mm</div>
<div class="c bn r" style="left:250px;width:51.9px;top:569px">32.7</div>
<div class="c" style="left:64.3px;top:581px">Equity Contribution</div>
<div class="c ctr" style="left:228.7px;width:38px;top:581px">US$mm</div>
<div class="c bn r" style="left:250px;width:51.9px;top:581px">16.7</div>
<div class="c" style="left:64.3px;top:593px">Dividend</div>
<div class="c ctr" style="left:228.7px;width:38px;top:593px">US$mm</div>
<div class="c bn r" style="left:250px;width:51.9px;top:593px">49.4</div>
<div class="c" style="left:269.6px;top:593px">-</div>
<div class="c b" style="left:64.3px;top:605px">Ending Cash</div>
<div class="c b ctr" style="left:218.7px;width:58px;top:605px">US$mm</div>
<div class="c b" style="left:64.3px;top:629px">Dividend Calculation</div>
<div class="c" style="left:64.3px;top:641px">Dividend Distribution Starting Date</div>
<div class="c ctr" style="left:228.7px;width:38px;top:641px">Date</div>
<div class="c" style="left:64.3px;top:653px">Cash Available for Distribution</div>
<div class="c ctr" style="left:228.7px;width:38px;top:653px">US$mm</div>
<div class="c" style="left:64.3px;top:665px">Minimum Cash</div>
<div class="c ctr" style="left:228.7px;width:38px;top:665px">US$mm</div>
<div class="c" style="left:64.3px;top:677px">Cash Requirement for Next Period</div>
<div class="c ctr" style="left:228.7px;width:38px;top:677px">US$mm</div>
<div class="c b" style="left:64.3px;top:689px">Dividend</div>
<div class="c b ctr" style="left:218.7px;width:58px;top:689px">US$mm</div>
<div class="c" style="left:64.3px;top:737px">Capital Calls for Acquisitions</div>
<div class="c ctr" style="left:228.7px;width:38px;top:737px">US$mm</div>
<div class="c n r" style="left:250px;width:51.8px;top:737px">950.0</div>
<div class="c" style="left:269.6px;top:737px">-</div>
<div class="c" style="left:64.3px;top:749px">Proceeds from Exits</div>
<div class="c ctr" style="left:228.7px;width:38px;top:749px">US$mm</div>
<div class="c n r" style="left:250px;width:51.8px;top:749px">1,900.0</div>
<div class="c b" style="left:64.3px;top:761px">Gross Cash Flows</div>
<div class="c b ctr" style="left:218.7px;width:58px;top:761px">US$mm</div>
<div class="c bn r" style="left:250px;width:51.9px;top:761px">950.0</div>
<div class="c" style="left:64.3px;top:773px">Management Fees</div>
<div class="c ctr" style="left:228.7px;width:38px;top:773px">US$mm</div>
<div class="c n r" style="left:250px;width:51.8px;top:773px">125.8</div>
<div class="c" style="left:269.6px;top:773px">-</div>
<div class="c" style="left:64.3px;top:785px">Establishment Fees (One-Offs)</div>
<div class="c ctr" style="left:228.7px;width:38px;top:785px">US$mm</div>
<div class="c n r" style="left:250px;width:51.8px;top:785px">2.6</div>
<div class="c" style="left:269.6px;top:785px">-</div>
<div class="c" style="left:64.3px;top:797px">Fund Expenses</div>
<div class="c ctr" style="left:228.7px;width:38px;top:797px">US$mm</div>
<div class="c n r" style="left:250px;width:51.8px;top:797px">26.3</div>
<div class="c" style="left:269.6px;top:797px">-</div>
<div class="c b" style="left:64.3px;top:809px">Net Cash Flows</div>
<div class="c b ctr" style="left:218.7px;width:58px;top:809px">US$mm</div>
<div class="c bn r" style="left:250px;width:51.9px;top:809px">795.3</div>
<div class="c n r g" style="left:266.8px;width:38.4px;top:641px;letter-spacing:-0.15px">6/30/25</div>
<div class="row" style="top:437px"><i class="w1 z">-</i><i class="w2">3.0</i><i class="z">-</i><i>8.6</i><i class="z">-</i><i>15.4</i><i class="z">-</i><i>9.0</i><i class="z">-</i><i>9.0</i><i class="z">-</i><i>9.0</i><i class="z">-</i><i>9.0</i><i class="z">-</i><i>9.0</i><i class="z">-</i><i>9.0</i><i class="z">-</i><i>8.5</i><i class="z">-</i><i>7.6</i><i class="z">-</i><i>6.7</i><i class="z">-</i><i>5.8</i></div>
<div class="row" style="top:449px"><i class="w1 z">-</i><i class="w2 z">-</i><i><u>-</u>0.4</i><i><u>-</u>1.6</i><i><u>-</u>1.1</i><i><u>-</u>2.9</i><i><u>-</u>2.9</i><i><u>-</u>2.9</i><i><u>-</u>2.4</i><i class="z">-</i><i class="z">-</i><i class="z">-</i><i class="z">-</i><i class="z">-</i><i class="z">-</i><i class="z">-</i><i class="z">-</i><i class="z">-</i><i class="z">-</i><i class="z">-</i><i class="z">-</i><i class="z">-</i><i class="z">-</i><i class="z">-</i><i class="z">-</i><i class="z">-</i></div>
<div class="row" style="top:461px"><i class="w1 z">-</i><i class="w2 z">-</i><i><u>-</u>1.0</i><i><u>-</u>1.0</i><i><u>-</u>1.2</i><i><u>-</u>1.2</i><i><u>-</u>1.5</i><i><u>-</u>1.5</i><i><u>-</u>1.6</i><i><u>-</u>1.6</i><i><u>-</u>1.6</i><i><u>-</u>1.6</i><i><u>-</u>1.7</i><i><u>-</u>1.7</i><i><u>-</u>1.7</i><i><u>-</u>1.7</i><i><u>-</u>1.7</i><i><u>-</u>1.7</i><i><u>-</u>1.7</i><i><u>-</u>1.7</i><i><u>-</u>1.8</i><i><u>-</u>1.8</i><i><u>-</u>1.8</i><i><u>-</u>1.8</i><i><u>-</u>1.9</i><i><u>-</u>1.9</i></div>
<div class="row" style="top:473px"><i class="w1 z">-</i><i class="w2 z">-</i><i class="z">-</i><i class="z">-</i><i class="z">-</i><i class="z">-</i><i class="z">-</i><i class="z">-</i><i class="z">-</i><i class="z">-</i><i class="z">-</i><i class="z">-</i><i class="z">-</i><i class="z">-</i><i class="z">-</i><i class="z">-</i><i class="z">-</i><i class="z">-</i><i class="z">-</i><i class="z">-</i><i class="z">-</i><i class="z">-</i><i class="z">-</i><i class="z">-</i><i class="z">-</i><i class="z">-</i></div>
<div class="row" style="top:485px"><i class="w1 z">-</i><i class="w2 z">-</i><i><u>-</u>0.3</i><i><u>-</u>0.3</i><i><u>-</u>0.4</i><i><u>-</u>0.4</i><i><u>-</u>0.4</i><i><u>-</u>0.4</i><i><u>-</u>0.4</i><i><u>-</u>0.4</i><i><u>-</u>0.4</i><i><u>-</u>0.4</i><i><u>-</u>0.4</i><i><u>-</u>0.4</i><i><u>-</u>0.4</i><i><u>-</u>0.4</i><i><u>-</u>0.4</i><i><u>-</u>0.4</i><i><u>-</u>0.4</i><i><u>-</u>0.4</i><i><u>-</u>0.4</i><i><u>-</u>0.4</i><i><u>-</u>0.4</i><i><u>-</u>0.4</i><i><u>-</u>0.4</i><i><u>-</u>0.4</i></div>
<div class="row" style="top:497px"><i class="w1 z">-</i><i class="w2 z">-</i><i>0.7</i><i>0.7</i><i>0.7</i><i>0.7</i><i>0.7</i><i>0.7</i><i class="z">-</i><i class="z">-</i><i class="z">-</i><i class="z">-</i><i class="z">-</i><i class="z">-</i><i class="z">-</i><i class="z">-</i><i class="z">-</i><i class="z">-</i><i class="z">-</i><i class="z">-</i><i class="z">-</i><i class="z">-</i><i class="z">-</i><i class="z">-</i><i class="z">-</i><i class="z">-</i></div>
<div class="row B" style="top:509px"><i class="w1 z">-</i><i class="w2">3.0</i><i><u>-</u>1.0</i><i>6.4</i><i><u>-</u>1.9</i><i>11.7</i><i><u>-</u>4.0</i><i>5.0</i><i><u>-</u>4.4</i><i>7.1</i><i><u>-</u>1.9</i><i>7.1</i><i><u>-</u>2.0</i><i>7.0</i><i><u>-</u>2.0</i><i>7.0</i><i><u>-</u>2.1</i><i>6.9</i><i><u>-</u>2.1</i><i>6.4</i><i><u>-</u>2.2</i><i>5.4</i><i><u>-</u>2.2</i><i>4.5</i><i><u>-</u>2.4</i><i>3.5</i></div>
<div class="row ZB" style="top:521px"><i class="w1 z">-</i><i class="w2 z">-</i><i class="z">-</i><i class="z">-</i><i class="z">-</i><i class="z">-</i><i class="z">-</i><i class="z">-</i><i class="z">-</i><i class="z">-</i><i class="z">-</i><i class="z">-</i><i class="z">-</i><i class="z">-</i><i class="z">-</i><i class="z">-</i><i class="z">-</i><i class="z">-</i><i class="z">-</i><i class="z">-</i><i class="z">-</i><i class="z">-</i><i class="z">-</i><i class="z">-</i><i class="z">-</i><i class="z">-</i></div>
<div class="row B" style="top:533px"><i class="w1 z">-</i><i class="w2">3.0</i><i><u>-</u>1.0</i><i>6.4</i><i><u>-</u>1.9</i><i>11.7</i><i><u>-</u>4.0</i><i>5.0</i><i><u>-</u>4.4</i><i>7.1</i><i><u>-</u>1.9</i><i>7.1</i><i><u>-</u>2.0</i><i>7.0</i><i><u>-</u>2.0</i><i>7.0</i><i><u>-</u>2.1</i><i>6.9</i><i><u>-</u>2.1</i><i>6.4</i><i><u>-</u>2.2</i><i>5.4</i><i><u>-</u>2.2</i><i>4.5</i><i><u>-</u>2.4</i><i>3.5</i></div>
<div class="row" style="top:557px"><i class="w1 z">-</i><i class="w2 z">-</i><i>3.0</i><i>2.0</i><i>8.4</i><i>6.5</i><i>18.2</i><i>14.2</i><i>19.2</i><i>0.5</i><i>7.6</i><i>5.6</i><i>12.7</i><i>0.5</i><i>7.5</i><i>5.4</i><i>12.4</i><i>0.5</i><i>7.4</i><i>5.2</i><i>11.6</i><i>0.5</i><i>5.9</i><i>3.6</i><i>8.1</i><i>0.5</i></div>
<div class="row" style="top:569px"><i class="w1 z">-</i><i class="w2">3.0</i><i><u>-</u>1.0</i><i>6.4</i><i><u>-</u>1.9</i><i>11.7</i><i><u>-</u>4.0</i><i>5.0</i><i><u>-</u>4.4</i><i>7.1</i><i><u>-</u>1.9</i><i>7.1</i><i><u>-</u>2.0</i><i>7.0</i><i><u>-</u>2.0</i><i>7.0</i><i><u>-</u>2.1</i><i>6.9</i><i><u>-</u>2.1</i><i>6.4</i><i><u>-</u>2.2</i><i>5.4</i><i><u>-</u>2.2</i><i>4.5</i><i><u>-</u>2.4</i><i>3.5</i></div>
<div class="row" style="top:581px"><i class="w1 z">-</i><i class="w2 z">-</i><i class="z">-</i><i class="z">-</i><i class="z">-</i><i class="z">-</i><i class="z">-</i><i class="z">-</i><i class="z">-</i><i class="z">-</i><i class="z">-</i><i class="z">-</i><i class="z">-</i><i class="z">-</i><i class="z">-</i><i class="z">-</i><i class="z">-</i><i class="z">-</i><i class="z">-</i><i class="z">-</i><i class="z">-</i><i class="z">-</i><i class="z">-</i><i class="z">-</i><i class="z">-</i><i class="z">-</i></div>
<div class="row" style="top:593px"><i class="w1 z">-</i><i class="w2 z">-</i><i class="z">-</i><i class="z">-</i><i class="z">-</i><i class="z">-</i><i class="z">-</i><i class="z">-</i><i><u>-</u>14.4</i><i class="z">-</i><i class="z">-</i><i class="z">-</i><i><u>-</u>10.1</i><i class="z">-</i><i class="z">-</i><i class="z">-</i><i><u>-</u>9.7</i><i class="z">-</i><i class="z">-</i><i class="z">-</i><i><u>-</u>8.8</i><i class="z">-</i><i class="z">-</i><i class="z">-</i><i><u>-</u>5.2</i><i class="z">-</i></div>
<div class="row B" style="top:605px"><i class="w1 z">-</i><i class="w2">3.0</i><i>2.0</i><i>8.4</i><i>6.5</i><i>18.2</i><i>14.2</i><i>19.2</i><i>0.5</i><i>7.6</i><i>5.6</i><i>12.7</i><i>0.5</i><i>7.5</i><i>5.4</i><i>12.4</i><i>0.5</i><i>7.4</i><i>5.2</i><i>11.6</i><i>0.5</i><i>5.9</i><i>3.6</i><i>8.1</i><i>0.5</i><i>4.0</i></div>
<div class="row" style="top:653px"><i class="w1 z">-</i><i class="w2 z">-</i><i class="z">-</i><i class="z">-</i><i class="z">-</i><i class="z">-</i><i>14.2</i><i>19.2</i><i>14.9</i><i>7.6</i><i>5.6</i><i>12.7</i><i>10.6</i><i>7.5</i><i>5.4</i><i>12.4</i><i>10.2</i><i>7.4</i><i>5.2</i><i>11.6</i><i>9.3</i><i>5.9</i><i>3.6</i><i>8.1</i><i>5.7</i><i>4.0</i></div>
<div class="row G" style="top:665px"><i class="w1">0.5</i><i class="w2">0.5</i><i>0.5</i><i>0.5</i><i>0.5</i><i>0.5</i><i>0.5</i><i>0.5</i><i>0.5</i><i>0.5</i><i>0.5</i><i>0.5</i><i>0.5</i><i>0.5</i><i>0.5</i><i>0.5</i><i>0.5</i><i>0.5</i><i>0.5</i><i>0.5</i><i>0.5</i><i>0.5</i><i>0.5</i><i>0.5</i><i>0.5</i><i>0.5</i></div>
<div class="row" style="top:677px"><i class="w1 z">-</i><i class="w2">1.0</i><i class="z">-</i><i class="z">-</i><i class="z">-</i><i class="z">-</i><i class="z">-</i><i class="z">-</i><i class="z">-</i><i>1.4</i><i class="z">-</i><i class="z">-</i><i class="z">-</i><i>1.5</i><i class="z">-</i><i class="z">-</i><i class="z">-</i><i>1.6</i><i class="z">-</i><i class="z">-</i><i class="z">-</i><i>1.7</i><i class="z">-</i><i class="z">-</i><i class="z">-</i><i>1.8</i></div>
<div class="row B" style="top:689px"><i class="w1 z">-</i><i class="w2 z">-</i><i class="z">-</i><i class="z">-</i><i class="z">-</i><i class="z">-</i><i class="z">-</i><i class="z">-</i><i>14.4</i><i class="z">-</i><i class="z">-</i><i class="z">-</i><i>10.1</i><i class="z">-</i><i class="z">-</i><i class="z">-</i><i>9.7</i><i class="z">-</i><i class="z">-</i><i class="z">-</i><i>8.8</i><i class="z">-</i><i class="z">-</i><i class="z">-</i><i>5.2</i><i class="z">-</i></div>
<div class="row" style="top:737px"><i class="w1 z">-</i><i class="w2"><u>-</u>100.0</i><i class="z">-</i><i><u>-</u>100.0</i><i class="z">-</i><i><u>-</u>100.0</i><i class="z">-</i><i><u>-</u>100.0</i><i class="z">-</i><i><u>-</u>100.0</i><i class="z">-</i><i><u>-</u>100.0</i><i class="z">-</i><i><u>-</u>100.0</i><i class="z">-</i><i><u>-</u>100.0</i><i class="z">-</i><i><u>-</u>100.0</i><i class="z">-</i><i><u>-</u>50.0</i><i class="z">-</i><i class="z">-</i><i class="z">-</i><i class="z">-</i><i class="z">-</i><i class="z">-</i></div>
<div class="row" style="top:749px"><i class="w1 z">-</i><i class="w2 z">-</i><i class="z">-</i><i class="z">-</i><i class="z">-</i><i class="z">-</i><i class="z">-</i><i class="z">-</i><i class="z">-</i><i class="z">-</i><i class="z">-</i><i class="z">-</i><i class="z">-</i><i class="z">-</i><i class="z">-</i><i class="z">-</i><i class="z">-</i><i class="z">-</i><i class="z">-</i><i class="z">-</i><i class="z">-</i><i>200.0</i><i class="z">-</i><i>200.0</i><i class="z">-</i><i>200.0</i></div>
<div class="row B" style="top:761px"><i class="w1 z">-</i><i class="w2"><u>-</u>100.0</i><i class="z">-</i><i class="h">####</i><i class="z">-</i><i class="h">####</i><i class="z">-</i><i class="h">####</i><i class="z">-</i><i class="h">####</i><i class="z">-</i><i class="h">####</i><i class="z">-</i><i class="h">####</i><i class="z">-</i><i class="h">####</i><i class="z">-</i><i class="h">####</i><i class="z">-</i><i><u>-</u>50.0</i><i class="z">-</i><i class="h">###</i><i class="z">-</i><i class="h">###</i><i class="z">-</i><i class="h">###</i></div>
<div class="row" style="top:773px"><i class="w1 z">-</i><i class="w2"><u>-</u>3.0</i><i class="z">-</i><i><u>-</u>8.6</i><i class="z">-</i><i><u>-</u>15.4</i><i class="z">-</i><i><u>-</u>9.0</i><i class="z">-</i><i><u>-</u>9.0</i><i class="z">-</i><i><u>-</u>9.0</i><i class="z">-</i><i><u>-</u>9.0</i><i class="z">-</i><i><u>-</u>9.0</i><i class="z">-</i><i><u>-</u>9.0</i><i class="z">-</i><i><u>-</u>8.5</i><i class="z">-</i><i><u>-</u>7.6</i><i class="z">-</i><i><u>-</u>6.7</i><i class="z">-</i><i><u>-</u>5.8</i></div>
<div class="row" style="top:785px"><i class="w1 z">-</i><i class="w2 g"><u>-</u>2.6</i><i class="z">-</i><i class="z">-</i><i class="z">-</i><i class="z">-</i><i class="z">-</i><i class="z">-</i><i class="z">-</i><i class="z">-</i><i class="z">-</i><i class="z">-</i><i class="z">-</i><i class="z">-</i><i class="z">-</i><i class="z">-</i><i class="z">-</i><i class="z">-</i><i class="z">-</i><i class="z">-</i><i class="z">-</i><i class="z">-</i><i class="z">-</i><i class="z">-</i><i class="z">-</i><i class="z">-</i></div>
<div class="row" style="top:797px"><i class="w1 z">-</i><i class="w2 z">-</i><i><u>-</u>0.5</i><i><u>-</u>0.5</i><i><u>-</u>0.6</i><i><u>-</u>0.6</i><i><u>-</u>0.6</i><i><u>-</u>0.6</i><i><u>-</u>0.6</i><i><u>-</u>0.6</i><i><u>-</u>0.6</i><i><u>-</u>0.6</i><i><u>-</u>0.6</i><i><u>-</u>0.6</i><i><u>-</u>0.6</i><i><u>-</u>0.6</i><i><u>-</u>0.7</i><i><u>-</u>0.7</i><i><u>-</u>0.7</i><i><u>-</u>0.7</i><i><u>-</u>0.7</i><i><u>-</u>0.7</i><i><u>-</u>0.7</i><i><u>-</u>0.7</i><i><u>-</u>0.7</i><i><u>-</u>0.7</i></div>
<div class="row B" style="top:809px"><i class="w1 z">-</i><i class="w2"><u>-</u>105.6</i><i><u>-</u>0.5</i><i class="h">####</i><i><u>-</u>0.6</i><i><u>-</u>116.0</i><i><u>-</u>0.6</i><i class="h">####</i><i><u>-</u>0.6</i><i class="h">####</i><i><u>-</u>0.6</i><i class="h">####</i><i><u>-</u>0.6</i><i class="h">####</i><i><u>-</u>0.6</i><i class="h">####</i><i><u>-</u>0.7</i><i class="h">####</i><i><u>-</u>0.7</i><i><u>-</u>59.2</i><i><u>-</u>0.7</i><i>191.7</i><i><u>-</u>0.7</i><i class="h">###</i><i><u>-</u>0.7</i><i class="h">###</i></div>
<!-- bottom -->
<div class="a" style="left:0;top:986px;width:1407px;height:32px;background:#f0f0f0;border-top:1px solid #d6d6d6;box-sizing:border-box;"></div>
<div class="a" style="left:0;top:1018px;width:1407px;height:1.5px;background:#fafafa;"></div>
<div class="a" style="left:0;top:1019.5px;width:1407px;height:8px;background:#f3f3f3;"></div>
<div class="a" style="left:116px;top:990px;width:53px;height:24px;background:#0b3d70;border-radius:5px;"></div>
<div class="a" style="left:289px;top:986px;width:72px;height:28px;background:#fff;border-radius:0 0 6px 6px;box-shadow:0 1px 2px rgba(0,0,0,.12);"></div>
<div class="a" style="left:297.5px;top:1008.3px;width:54px;height:2.5px;background:#107c41;border-radius:1.2px;"></div>
<div class="a" style="left:173px;top:992px;width:1px;height:20px;background:#d0d0d0;"></div>
<div class="a" style="left:284px;top:992px;width:1px;height:20px;background:#d0d0d0;"></div>
<div class="a" style="left:364.5px;top:992px;width:1px;height:20px;background:#d0d0d0;"></div>
<div class="a" style="left:1188.5px;top:996.5px;width:240px;height:9.6px;border-radius:4.8px;background:#757575;"></div>
<svg style="left:0;top:0" width="1407" height="1027" viewBox="0 0 1407 1027"><path d="M34.5 997.8 L29.3 1001.8 L34.5 1005.8" fill="none" stroke="#b4b4b4" stroke-width="1.2" stroke-linecap="round" stroke-linejoin="round"/><path d="M61.3 997.8 L66.5 1001.8 L61.3 1005.8" fill="none" stroke="#b4b4b4" stroke-width="1.2" stroke-linecap="round" stroke-linejoin="round"/><path d="M407 1001.5 H417.6 M412.3 996.2 V1006.8" stroke="#3a3a3a" stroke-width="1.1" fill="none"/><rect x="1154" y="997.4" width="2" height="2" fill="#2b2b2b"/><rect x="1154" y="1001.7" width="2" height="2" fill="#2b2b2b"/><rect x="1154" y="1006" width="2" height="2" fill="#2b2b2b"/><path d="M1183 997.3 L1176.6 1001.5 L1183 1005.7 Z" fill="#6b6b6b"/><circle cx="64" cy="1024" r="1.7" fill="none" stroke="#333" stroke-width="1"/><path d="M58.8 1026.8 H69.2" stroke="#333" stroke-width="1.1"/></svg>
<!-- UI text -->
<span class="t" style="left:18.26px;top:19px;font-size:8.6px;line-height:12px;color:#ffffff;font-weight:700;">X</span>
<span class="t" style="left:48.02px;top:16px;font-size:12px;line-height:16px;color:#242424;letter-spacing:-0.304px;">AutoSave</span>
<span class="t" style="left:111.02px;top:16px;font-size:12px;line-height:16px;color:#ffffff;letter-spacing:-1.096px;">On</span>
<span class="t" style="left:430.84px;top:18px;font-size:11.6px;line-height:14px;color:#242424;letter-spacing:0.132px;">Private Equity Fund Model &amp; Econom...</span>
<span class="t" style="left:644.20px;top:18px;font-size:12px;line-height:16px;color:#242424;">•</span>
<span class="t" style="left:653.34px;top:18px;font-size:11.6px;line-height:14px;color:#242424;letter-spacing:-0.617px;">Saved</span>
<span class="t" style="left:783.32px;top:17px;font-size:12px;line-height:16px;color:#616161;letter-spacing:-0.022px;">Search</span>
<span class="t" style="left:21.52px;top:56px;font-size:12px;line-height:16px;color:#242424;letter-spacing:-0.308px;">File</span>
<span class="t" style="left:67.52px;top:56px;font-size:12px;line-height:16px;color:#242424;letter-spacing:1.135px;">Home</span>
<span class="t" style="left:123.52px;top:56px;font-size:12px;line-height:16px;color:#242424;letter-spacing:0.481px;">Insert</span>
<span class="t" style="left:178.52px;top:56px;font-size:12px;line-height:16px;color:#242424;letter-spacing:0.403px;">Page Layout</span>
<span class="t" style="left:271.52px;top:56px;font-size:12px;line-height:16px;color:#242424;letter-spacing:0.486px;">Formulas</span>
<span class="t" style="left:345.52px;top:56px;font-size:12px;line-height:16px;color:#242424;letter-spacing:0.687px;">Data</span>
<span class="t" style="left:393.52px;top:56px;font-size:12px;line-height:16px;color:#242424;letter-spacing:0.212px;">Review</span>
<span class="t" style="left:502.52px;top:56px;font-size:12px;line-height:16px;color:#242424;letter-spacing:0.578px;">Automate</span>
<span class="t" style="left:580.52px;top:56px;font-size:12px;line-height:16px;color:#242424;letter-spacing:0.578px;">Help</span>
<span class="t" style="left:628.52px;top:56px;font-size:12px;line-height:16px;color:#242424;letter-spacing:0.380px;">S&amp;P Capital IQ</span>
<span class="t" style="left:453.52px;top:56px;font-size:12px;line-height:16px;color:#242424;font-weight:700;letter-spacing:0.426px;">View</span>
<span class="t" style="left:22.52px;top:94px;font-size:12px;line-height:16px;color:#242424;letter-spacing:0.065px;">Default</span>
<span class="t" style="left:44.32px;top:127px;font-size:12px;line-height:16px;color:#b3b3b3;letter-spacing:-1.137px;">Keep</span>
<span class="t" style="left:104.92px;top:127px;font-size:12px;line-height:16px;color:#b3b3b3;letter-spacing:-0.499px;">Exit</span>
<span class="t" style="left:159.32px;top:127px;font-size:12px;line-height:16px;color:#242424;letter-spacing:-0.198px;">New</span>
<span class="t" style="left:218.32px;top:127px;font-size:12px;line-height:16px;color:#b3b3b3;letter-spacing:-0.023px;">Options</span>
<span class="t" style="left:115.82px;top:160px;font-size:12px;line-height:16px;color:#242424;letter-spacing:-0.431px;">Sheet View</span>
<span class="t" style="left:287.32px;top:120px;font-size:12px;line-height:16px;color:#242424;letter-spacing:0.090px;">Normal</span>
<span class="t" style="left:334.02px;top:120px;font-size:12px;line-height:16px;color:#242424;letter-spacing:-0.533px;">Page Break</span>
<span class="t" style="left:343.12px;top:136px;font-size:12px;line-height:16px;color:#242424;letter-spacing:-0.378px;">Preview</span>
<span class="t" style="left:405.02px;top:120px;font-size:12px;line-height:16px;color:#242424;letter-spacing:-0.704px;">Page</span>
<span class="t" style="left:400.32px;top:136px;font-size:12px;line-height:16px;color:#242424;letter-spacing:-0.122px;">Layout</span>
<span class="t" style="left:443.12px;top:120px;font-size:12px;line-height:16px;color:#242424;letter-spacing:-0.045px;">Custom</span>
<span class="t" style="left:448.82px;top:136px;font-size:12px;line-height:16px;color:#242424;letter-spacing:-0.519px;">Views</span>
<span class="t" style="left:341.52px;top:160px;font-size:12px;line-height:16px;color:#242424;letter-spacing:-0.078px;">Workbook Views</span>
<span class="t" style="left:506.12px;top:120px;font-size:12px;line-height:16px;color:#242424;letter-spacing:0.069px;">Navigation</span>
<span class="t" style="left:589.92px;top:87px;font-size:12px;line-height:16px;color:#b3b3b3;letter-spacing:-0.417px;">Ruler</span>
<span class="t" style="left:589.92px;top:113px;font-size:12px;line-height:16px;color:#242424;letter-spacing:-0.192px;">Gridlines</span>
<span class="t" style="left:589.92px;top:139px;font-size:12px;line-height:16px;color:#242424;letter-spacing:-0.221px;">Formula Bar</span>
<span class="t" style="left:684.02px;top:87px;font-size:12px;line-height:16px;color:#242424;letter-spacing:-0.112px;">Headings</span>
<span class="t" style="left:607.82px;top:160px;font-size:12px;line-height:16px;color:#242424;letter-spacing:-0.304px;">Show</span>
<span class="t" style="left:761.52px;top:120px;font-size:12px;line-height:16px;color:#242424;letter-spacing:0.344px;">Zoom</span>
<span class="t" style="left:808.52px;top:120px;font-size:12px;line-height:16px;color:#242424;letter-spacing:-0.994px;">100%</span>
<span class="t" style="left:820.40px;top:105px;font-size:10px;line-height:13px;color:#ffffff;letter-spacing:-0.369px;">100</span>
<span class="t" style="left:847.52px;top:120px;font-size:12px;line-height:16px;color:#242424;letter-spacing:0.317px;">Zoom to</span>
<span class="t" style="left:846.82px;top:136px;font-size:12px;line-height:16px;color:#242424;letter-spacing:-0.219px;">Selection</span>
<span class="t" style="left:812.52px;top:160px;font-size:12px;line-height:16px;color:#242424;letter-spacing:-0.656px;">Zoom</span>
<span class="t" style="left:925.82px;top:120px;font-size:12px;line-height:16px;color:#242424;letter-spacing:-0.048px;">New</span>
<span class="t" style="left:915.82px;top:136px;font-size:12px;line-height:16px;color:#242424;letter-spacing:0.247px;">Window</span>
<span class="t" style="left:966.82px;top:120px;font-size:12px;line-height:16px;color:#242424;letter-spacing:-0.097px;">Arrange</span>
<span class="t" style="left:980.92px;top:136px;font-size:12px;line-height:16px;color:#242424;letter-spacing:-0.162px;">All</span>
<span class="t" style="left:1021.12px;top:120px;font-size:12px;line-height:16px;color:#242424;letter-spacing:-0.928px;">Freeze</span>
<span class="t" style="left:1016.12px;top:136px;font-size:12px;line-height:16px;color:#242424;letter-spacing:-0.903px;">Panes</span>
<span class="t" style="left:1086.52px;top:87px;font-size:12px;line-height:16px;color:#242424;letter-spacing:-0.106px;">Split</span>
<span class="t" style="left:1086.52px;top:113px;font-size:12px;line-height:16px;color:#242424;letter-spacing:0.111px;">Hide</span>
<span class="t" style="left:1086.52px;top:139px;font-size:12px;line-height:16px;color:#b3b3b3;letter-spacing:0.038px;">Unhide</span>
<span class="t" style="left:1170.82px;top:87px;font-size:12px;line-height:16px;color:#242424;letter-spacing:-0.343px;">View Side by Side</span>
<span class="t" style="left:1170.82px;top:113px;font-size:12px;line-height:16px;color:#b3b3b3;letter-spacing:-0.114px;">Synchronous Scrolling</span>
<span class="t" style="left:1170.82px;top:139px;font-size:12px;line-height:16px;color:#b3b3b3;letter-spacing:-0.149px;">Reset Window Position</span>
<span class="t" style="left:1123.92px;top:160px;font-size:12px;line-height:16px;color:#242424;letter-spacing:0.247px;">Window</span>
<span class="t" style="left:1328.52px;top:120px;font-size:12px;line-height:16px;color:#242424;letter-spacing:-0.125px;">Switch</span>
<span class="t" style="left:1316.12px;top:136px;font-size:12px;line-height:16px;color:#242424;letter-spacing:-0.011px;">Windows</span>
<span class="t" style="left:1397.52px;top:120px;font-size:12px;line-height:16px;color:#242424;letter-spacing:-0.185px;">Macros</span>
<span class="t" style="left:1397.52px;top:160px;font-size:12px;line-height:16px;color:#242424;letter-spacing:-0.185px;">Macros</span>
<span class="t" style="left:15.02px;top:192px;font-size:12px;line-height:16px;color:#242424;letter-spacing:-0.148px;">C18</span>
<span class="t" style="left:219.52px;top:192px;font-size:12px;line-height:16px;color:#242424;letter-spacing:0.366px;">BoP</span>
<span class="t" style="left:184.80px;top:190px;font-size:16px;line-height:19px;color:#444;font-weight:700;font-family:'Liberation Serif', serif;font-style:italic;">f</span>
<span class="t" style="left:190.80px;top:192px;font-size:13.5px;line-height:17px;color:#444;font-weight:700;font-family:'Liberation Serif', serif;font-style:italic;">x</span>
<span class="t" style="left:123.44px;top:993px;font-size:14px;line-height:18px;color:#ffffff;letter-spacing:-0.342px;">Cover</span>
<span class="t" style="left:187.44px;top:993px;font-size:14px;line-height:18px;color:#242424;letter-spacing:-0.128px;">Control Panel</span>
<span class="t" style="left:296.96px;top:991px;font-size:13.5px;line-height:17px;color:#242424;font-weight:700;letter-spacing:-0.066px;">Build-up</span>
<span class="t" style="left:7.52px;top:1023px;font-size:12px;line-height:16px;color:#242424;letter-spacing:-0.567px;">Ready</span>
<span class="t" style="left:76.32px;top:1023px;font-size:12px;line-height:16px;color:#242424;letter-spacing:-0.058px;">Accessibility: Investigate</span>
</div>
</body></html>
